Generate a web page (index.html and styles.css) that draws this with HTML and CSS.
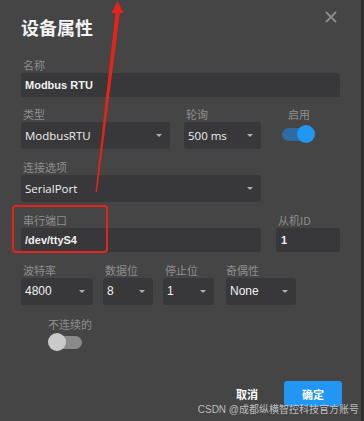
FILE: index.html
```html
<!DOCTYPE html>
<html lang="zh-CN">
<head>
  <meta charset="UTF-8">
  <title>设备属性</title>
  <link rel="stylesheet" href="styles.css">
</head>
<body>

  <div class="dialog">
    <div class="dialog-header">
      <h1>设备属性</h1>
      <svg class="close" width="12" height="12" viewBox="0 0 12 12">
        <path d="M1 1 L11 11 M11 1 L1 11" stroke="#8c8c8c" stroke-width="1.8" fill="none"/>
      </svg>
    </div>

    <div class="form">
      <div class="row row-name">
        <div class="field grow">
          <label class="label">名称</label>
          <div class="input bold">Modbus RTU</div>
        </div>
      </div>

      <div class="row row-type">
        <div class="field w-type">
          <label class="label">类型</label>
          <div class="select">ModbusRTU<span class="caret"></span></div>
        </div>
        <div class="field w-poll">
          <label class="label">轮询</label>
          <div class="select">500 ms<span class="caret"></span></div>
        </div>
        <div class="field enable">
          <label class="label center">启用</label>
          <span class="switch on"><span class="track"></span><span class="knob"></span></span>
        </div>
      </div>

      <div class="row row-conn">
        <div class="field w-conn">
          <label class="label">连接选项</label>
          <div class="select">SerialPort<span class="caret"></span></div>
        </div>
      </div>

      <div class="row row-port">
        <div class="field w-conn">
          <label class="label">串行端口</label>
          <div class="input bold">/dev/ttyS4</div>
        </div>
        <div class="field w-slave">
          <label class="label">从机ID</label>
          <div class="input bold">1</div>
        </div>
      </div>

      <div class="row row-serial">
        <div class="field w-baud">
          <label class="label">波特率</label>
          <div class="select arial">4800<span class="caret"></span></div>
        </div>
        <div class="field w-data">
          <label class="label">数据位</label>
          <div class="select arial">8<span class="caret"></span></div>
        </div>
        <div class="field w-stop">
          <label class="label">停止位</label>
          <div class="select arial">1<span class="caret"></span></div>
        </div>
        <div class="field w-parity">
          <label class="label flush">奇偶性</label>
          <div class="select arial">None<span class="caret"></span></div>
        </div>
      </div>

      <div class="row row-discrete">
        <div class="field discrete">
          <label class="label center">不连续的</label>
          <span class="switch off"><span class="track"></span><span class="knob"></span></span>
        </div>
      </div>
    </div>

    <div class="actions">
      <button class="btn btn-text">取消</button>
      <button class="btn btn-primary">确定</button>
    </div>

    <!-- annotations drawn on top of the screenshot -->
    <svg class="marks" width="361" height="421" viewBox="0 0 361 421">
      <polygon points="117.5,1 111.5,13 123.5,13" fill="#e3241c"/>
      <polygon points="115.5,12 120,12 97,192 95.5,192" fill="#e3241c"/>
      <rect x="13" y="206" width="94" height="46" rx="3" fill="none" stroke="#e3241c" stroke-width="2"/>
    </svg>

    <div class="watermark">CSDN @成都纵横智控科技官方账号</div>
  </div>

</body>
</html>
```

FILE: styles.css
```css
body {
  margin: 0;
  background: #2e2e2e;
  font-family: "Noto Sans CJK SC", sans-serif;
}

.dialog {
  position: relative;
  width: 361px;
  height: 421px;
  box-sizing: border-box;
  padding: 13px 21px 0;
  background: #454545;
  overflow: hidden;
}

.dialog-header {
  display: flex;
  justify-content: space-between;
  align-items: flex-start;
}

h1 {
  margin: 0;
  font-size: 18px;
  line-height: 28px;
  font-weight: bold;
  color: #f2f2f2;
}

.close {
  margin-top: -2px;
  margin-right: 3px;
}

.form {
  margin-top: 17px;
}

.row {
  display: flex;
  align-items: flex-start;
}

.row-type { margin-top: 10px; gap: 14px; }
.row-conn { margin-top: 11px; }
.row-port { margin-top: 11px; gap: 15px; }
.row-serial { margin-top: 11px; }
.row-discrete { margin-top: 12px; }

.field {
  display: flex;
  flex-direction: column;
}

.grow { flex: 1; }
.w-type { width: 149px; }
.w-poll { width: 77px; }
.w-conn { width: 240px; }
.w-slave { width: 64px; }
.w-baud { width: 72px; }
.w-data { width: 50px; margin-left: 10px; }
.w-stop { width: 51px; margin-left: 10px; }
.w-parity { width: 70px; margin-left: 12px; }

.label {
  height: 15px;
  padding-left: 2px;
  font-size: 11px;
  line-height: 15px;
  color: #8e8e8e;
  white-space: nowrap;
}

.label.flush { padding-left: 0; }
.label.center { padding-left: 0; text-align: center; }

.input,
.select {
  position: relative;
  box-sizing: border-box;
  padding-left: 4px;
  background: #38383a;
  border-radius: 3px;
  color: #f0f0f0;
  white-space: nowrap;
}

.input {
  height: 24px;
  line-height: 24px;
  font-family: "Liberation Sans", Arial, sans-serif;
  font-size: 11px;
}

.input.bold { font-weight: bold; }

.select {
  height: 27px;
  line-height: 27px;
  font-family: "Open Sans", sans-serif;
  font-size: 11.5px;
}

.select.arial {
  font-family: "Liberation Sans", Arial, sans-serif;
  font-size: 12px;
}

.w-slave .input { padding-left: 5px; }

.caret {
  position: absolute;
  right: 8px;
  top: 12px;
  width: 0;
  height: 0;
  border-left: 3.5px solid transparent;
  border-right: 3.5px solid transparent;
  border-top: 3.5px solid #b0b0b0;
}

.enable {
  width: 34px;
  margin-left: 7px;
}

.discrete {
  width: 48px;
  margin-left: 25px;
}

.switch {
  position: relative;
  display: block;
  width: 34px;
  height: 20px;
}

.switch .track {
  position: absolute;
  top: 4px;
  height: 13px;
  border-radius: 7px;
}

.switch .knob {
  position: absolute;
  top: 1px;
  width: 18px;
  height: 18px;
  border-radius: 50%;
}

.switch.on { margin-top: 2px; }
.switch.on .track { left: 0; width: 28px; background: #2f6aa3; }
.switch.on .knob { left: 15px; background: #2196f3; }

.switch.off { margin-left: 2px; margin-top: 0; }
.switch.off .track { left: 7px; width: 27px; background: #8a8a8a; }
.switch.off .knob { left: 0; background: #cacaca; }

.actions {
  display: flex;
  justify-content: flex-end;
  gap: 8px;
  margin-top: 29px;
  margin-right: -2px;
}

.btn {
  height: 25px;
  border: none;
  border-radius: 3px;
  font-family: "Noto Sans CJK SC", sans-serif;
  font-size: 11px;
  font-weight: bold;
  color: #ffffff;
}

.btn-text {
  width: 58px;
  background: transparent;
}

.btn-primary {
  width: 58px;
  background: #2196f3;
}

.marks {
  position: absolute;
  left: 0;
  top: 0;
  pointer-events: none;
}

.watermark {
  position: absolute;
  right: 2px;
  bottom: 5px;
  font-family: "Liberation Sans", "Noto Sans CJK SC", sans-serif;
  font-size: 10px;
  line-height: 13px;
  color: rgba(215, 215, 215, 0.85);
  white-space: nowrap;
}
```
